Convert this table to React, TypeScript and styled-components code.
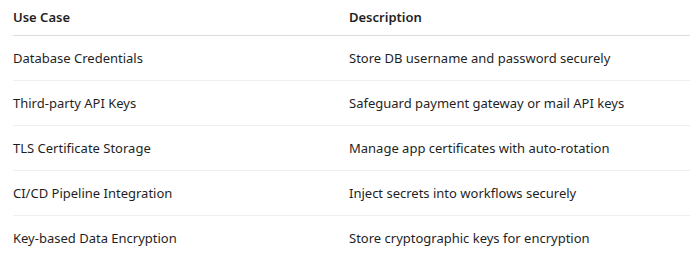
import { createGlobalStyle, styled } from 'styled-components'

const GlobalStyle = createGlobalStyle`
  body {
    margin: 0;
    background: #ffffff;
    font-family: 'Noto Sans', 'Open Sans', sans-serif;
  }
`

const Table = styled.table`
  margin-left: 13px;
  width: 677px;
  border-collapse: collapse;
  color: #1f1f1f;
  font-size: 13px;
  line-height: 1.25;
`

const HeadCell = styled.th<{ $first?: boolean }>`
  text-align: left;
  font-weight: 600;
  height: 35px;
  padding: 0;
  border-bottom: 1px solid #dcdcdc;
  vertical-align: middle;
  width: ${p => (p.$first ? '336px' : 'auto')};
`

const Row = styled.tr<{ $last?: boolean }>`
  border-bottom: ${p => (p.$last ? 'none' : '1px solid #efefef')};
`

const Cell = styled.td`
  height: 43px;
  padding: 1px 0 0;
  vertical-align: middle;
`

const rows = [
  ['Database Credentials', 'Store DB username and password securely'],
  ['Third-party API Keys', 'Safeguard payment gateway or mail API keys'],
  ['TLS Certificate Storage', 'Manage app certificates with auto-rotation'],
  ['CI/CD Pipeline Integration', 'Inject secrets into workflows securely'],
  ['Key-based Data Encryption', 'Store cryptographic keys for encryption'],
]

export default function App() {
  return (
    <>
      <GlobalStyle />
      <Table>
        <thead>
          <tr>
            <HeadCell $first>Use Case</HeadCell>
            <HeadCell>Description</HeadCell>
          </tr>
        </thead>
        <tbody>
          {rows.map(([useCase, description], i) => (
            <Row key={useCase} $last={i === rows.length - 1}>
              <Cell>{useCase}</Cell>
              <Cell>{description}</Cell>
            </Row>
          ))}
        </tbody>
      </Table>
    </>
  )
}
